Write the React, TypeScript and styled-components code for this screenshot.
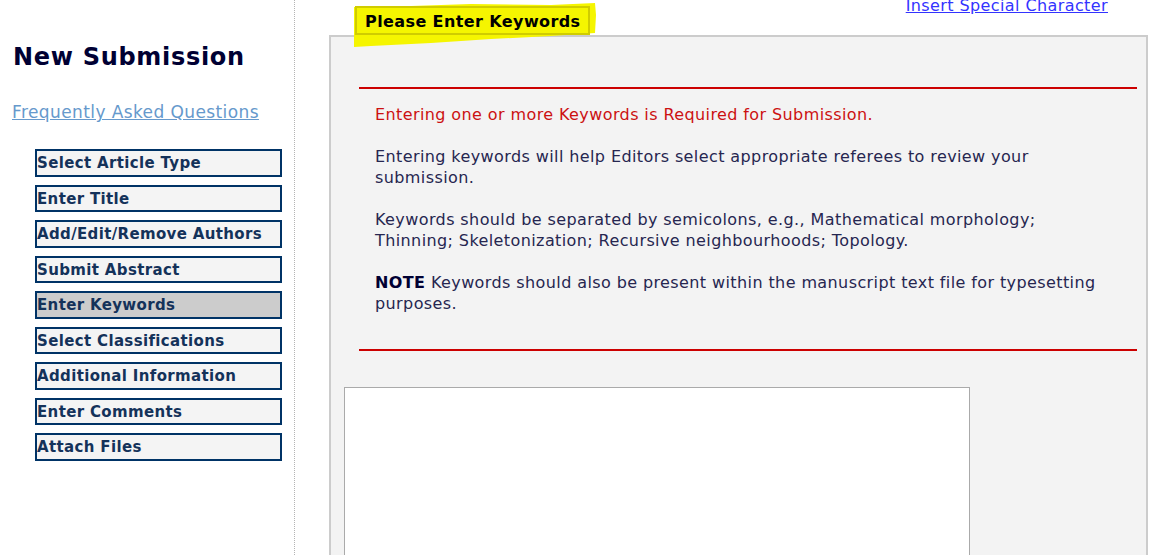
import React from "react";
import styled, { createGlobalStyle } from "styled-components";

const Global = createGlobalStyle`
  html, body { margin: 0; padding: 0; background: #ffffff; }
  body { font-family: "DejaVu Sans", Verdana, sans-serif; overflow: hidden; }
`;

const Page = styled.div`
  display: flex;
  width: 1165px;
  height: 555px;
  overflow: hidden;
`;

const Sidebar = styled.aside`
  width: 295px;
  flex: none;
  border-right: 1px dotted #b4b4b4;
  box-sizing: border-box;
  padding: 42px 0 0 0;
`;

const Title = styled.h1`
  margin: 0 0 0 13px;
  font-size: 24px;
  line-height: 30px;
  letter-spacing: 0.7px;
  font-weight: bold;
  color: #000033;
`;

const Faq = styled.a`
  display: block;
  margin: 29px 0 0 12px;
  font-size: 17px;
  line-height: 22px;
  letter-spacing: 0.4px;
  color: #6699cc;
  text-decoration: underline;
`;

const Menu = styled.nav`
  display: flex;
  flex-direction: column;
  gap: 8px;
  margin: 26px 0 0 35px;
  width: 247px;
`;

const MenuItem = styled.div<{ $active?: boolean }>`
  height: 27.5px;
  box-sizing: border-box;
  border: 2px solid #003366;
  background: ${(p) => (p.$active ? "#cccccc" : "#f4f4f4")};
  color: #14325a;
  font-weight: bold;
  font-size: 15px;
  line-height: 24px;
  letter-spacing: 0.35px;
  white-space: nowrap;
`;

const Main = styled.main`
  flex: 1;
  padding-left: 34px;
  display: flex;
  flex-direction: column;
`;

const TopBar = styled.div`
  display: flex;
  align-items: flex-start;
  justify-content: space-between;
  height: 35px;
  padding-right: 57px;
`;

const TabWrap = styled.div`
  position: relative;
  margin: 6px 0 0 26px;
`;

const Marker = styled.svg`
  position: absolute;
  left: -4px;
  top: -3px;
  width: 246px;
  height: 44px;
  z-index: 2;
`;

const Tab = styled.div`
  position: relative;
  z-index: 3;
  box-sizing: border-box;
  height: 29px;
  padding: 2px 7px 0 8px;
  border: 2px solid #d0cc00;
  font-weight: bold;
  font-size: 16px;
  line-height: 23px;
  letter-spacing: 0.4px;
  color: #000000;
  white-space: nowrap;
`;

const SpecialLink = styled.a`
  margin-top: -4px;
  font-size: 16px;
  line-height: 20px;
  letter-spacing: 0.4px;
  color: #3333ff;
  text-decoration: underline;
`;

const Panel = styled.section`
  flex: 1;
  margin-right: 17px;
  background: #f3f3f3;
  border: 2px solid #cccccc;
  border-bottom: none;
  padding: 50px 9px 0 28px;
  position: relative;
  z-index: 1;
`;

const RedRule = styled.hr`
  margin: 0;
  border: none;
  border-top: 2px solid #cc0000;
`;

const Notes = styled.div`
  padding: 15px 28px 35px 16px;
  font-size: 16px;
  line-height: 21px;
  letter-spacing: 0.4px;
  color: #262650;
`;

const Para = styled.p<{ $red?: boolean }>`
  margin: 0 0 21px 0;
  color: ${(p) => (p.$red ? "#cc1111" : "inherit")};
  &:last-child { margin-bottom: 0; }
`;

const Strong = styled.b`
  color: #000033;
`;

const Area = styled.textarea`
  display: block;
  margin: 36px 0 0 -15px;
  width: 626px;
  height: 200px;
  box-sizing: border-box;
  border: 1px solid #aaaaaa;
  background: #ffffff;
  resize: none;
  outline: none;
`;

const items = [
  "Select Article Type",
  "Enter Title",
  "Add/Edit/Remove Authors",
  "Submit Abstract",
  "Enter Keywords",
  "Select Classifications",
  "Additional Information",
  "Enter Comments",
  "Attach Files",
];

export default function App() {
  return (
    <Page>
      <Global />
      <Sidebar>
        <Title>New Submission</Title>
        <Faq href="#">Frequently Asked Questions</Faq>
        <Menu>
          {items.map((t) => (
            <MenuItem key={t} $active={t === "Enter Keywords"}>
              {t}
            </MenuItem>
          ))}
        </Menu>
      </Sidebar>
      <Main>
        <TopBar>
          <TabWrap>
            <Marker viewBox="0 0 246 44" preserveAspectRatio="none">
              <path
                d="M3 4 L60 3 L120 1 L200 2 L244 0 L245 12 L244 30 L200 33 L140 36 L80 40 L20 43 L3 44 Z"
                fill="#f5f500"
              />
            </Marker>
            <Tab>Please Enter Keywords</Tab>
          </TabWrap>
          <SpecialLink href="#">Insert Special Character</SpecialLink>
        </TopBar>
        <Panel>
          <RedRule />
          <Notes>
            <Para $red>Entering one or more Keywords is Required for Submission.</Para>
            <Para>
              Entering keywords will help Editors select appropriate referees to review your
              submission.
            </Para>
            <Para>
              Keywords should be separated by semicolons, e.g., Mathematical morphology;
              Thinning; Skeletonization; Recursive neighbourhoods; Topology.
            </Para>
            <Para>
              <Strong>NOTE</Strong> Keywords should also be present within the manuscript text
              file for typesetting purposes.
            </Para>
          </Notes>
          <RedRule />
          <Area />
        </Panel>
      </Main>
    </Page>
  );
}
